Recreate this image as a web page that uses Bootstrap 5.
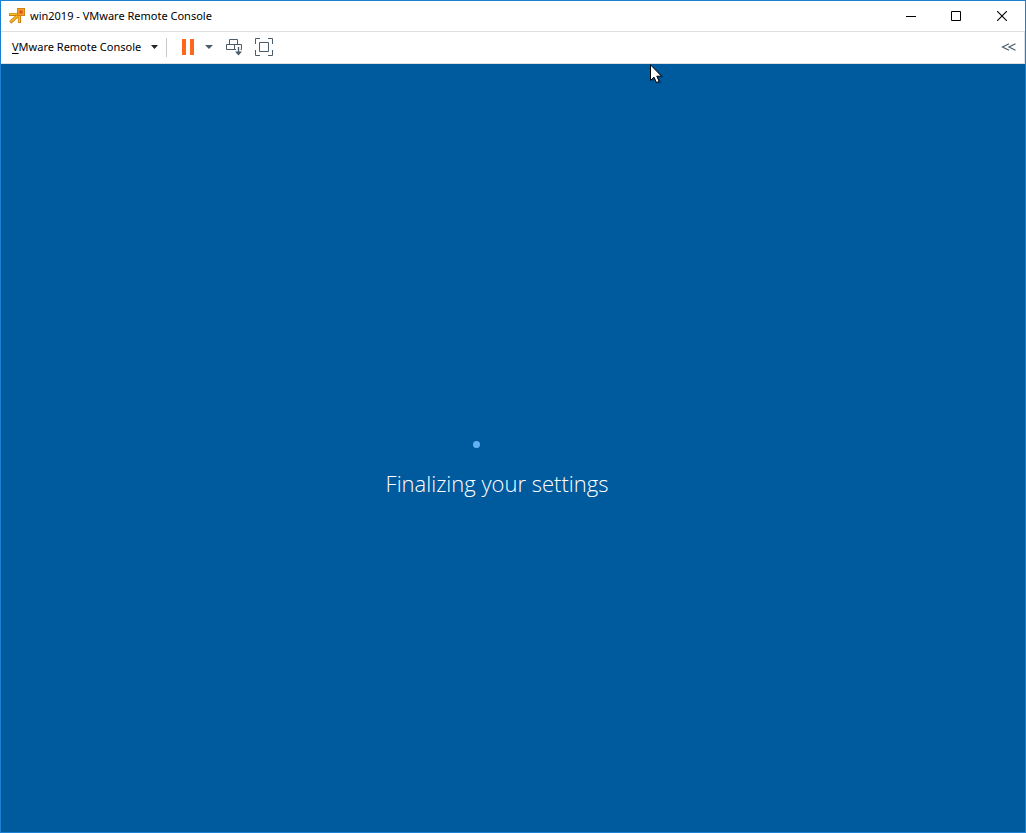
<!DOCTYPE html>
<html lang="en">
<head>
<meta charset="utf-8">
<meta name="viewport" content="width=device-width, initial-scale=1">
<title>win2019 - VMware Remote Console</title>
<link rel="stylesheet" href="https://cdn.jsdelivr.net/npm/bootstrap@5.3.0/dist/css/bootstrap.min.css">
<style>
  body { font-family: "Noto Sans", "Open Sans", sans-serif; font-size: 11px; line-height: 16px; color: #000; }
  .console-window { border: 1px solid #1a80d4; }
  .title-bar { height: 30px; padding-left: 7px; }
  .title-text { font-size: 11px; line-height: 16px; margin: 0 0 0 5px; font-weight: 400; }
  .plain-btn { background: none; border: 0; padding: 0; color: inherit; display: flex; align-items: center; justify-content: center; }
  .caption-btn { width: 46px; height: 30px; }
  .tool-bar { height: 33px; border-top: 1px solid #dfdfdf; border-bottom: 1px solid #dfdfdf; border-right: 1px solid #dfdfdf; padding: 0 8px 1px 11px; }
  .menu-btn { gap: 10px; }
  .menu-btn u { text-underline-offset: 2px; }
  .divider { width: 1px; height: 19px; background: #c8c8c8; margin: 0 14px 0 8px; }
  .tools { gap: 11px; margin-left: 11px; }
  .guest-screen { background: #005a9e; padding: 30px 32px 0 0; }
  .progress-ring { width: 48px; height: 40px; padding-top: 13px; }
  .ring-dot { width: 7px; height: 7px; background: #64b1f2; }
  .guest-text { font-family: "Open Sans", "Noto Sans", sans-serif; font-weight: 350; font-size: 22px; line-height: 30px; color: #fff; margin: 0; }
  .pointer { left: 648px; top: 0; }
  svg { display: block; flex: none; }
</style>
<script src="https://cdn.jsdelivr.net/npm/bootstrap@5.3.0/dist/js/bootstrap.bundle.min.js"></script>
</head>
<body>
<div class="console-window d-flex flex-column vh-100 bg-white">
  <header class="title-bar d-flex align-items-center">
    <svg width="17" height="17" viewBox="0 0 17 17" aria-hidden="true">
      <path d="M1 6.500H11M2.200 14.500L11 6.500M11.500 7V15" fill="none" stroke="#c9800f" stroke-width="3.200"/>
      <path d="M1.500 6.300H11M2.600 14L11 6.300M11.300 7V14.500" fill="none" stroke="#fbb829" stroke-width="1.600"/>
      <rect x="9.500" y=".5" width="7" height="7" fill="#f7b12a" stroke="#cf8412"/>
      <rect x="11" y="2" width="4" height="4" fill="#df5519" stroke="#f2892f"/>
    </svg>
    <h1 class="title-text text-nowrap">win2019 - VMware Remote Console</h1>
    <div class="d-flex ms-auto">
      <button class="plain-btn caption-btn" type="button" aria-label="Minimize">
        <svg width="12" height="11" viewBox="0 0 12 11"><path d="M2 5.500H12" stroke="#000"/></svg>
      </button>
      <button class="plain-btn caption-btn" type="button" aria-label="Maximize">
        <svg width="10" height="10" viewBox="0 0 10 10"><path d="M.5 .5H9.500V9.500H.5Z" fill="none" stroke="#000"/></svg>
      </button>
      <button class="plain-btn caption-btn" type="button" aria-label="Close">
        <svg width="10" height="10" viewBox="0 0 10 10"><path d="M0 0L10 10M10 0L0 10" stroke="#000" stroke-width="1.100"/></svg>
      </button>
    </div>
  </header>

  <nav class="tool-bar d-flex align-items-center" aria-label="Console toolbar">
    <button class="plain-btn menu-btn text-nowrap" type="button"><span><u>V</u>Mware Remote Console</span>
      <svg width="7" height="4" viewBox="0 0 7 4"><path d="M0 0H7L3.500 4Z" fill="#222"/></svg>
    </button>
    <span class="divider"></span>
    <button class="plain-btn" type="button" aria-label="Suspend guest">
      <svg width="14" height="16" viewBox="0 0 14 16"><path d="M1 0H5V16H1ZM9 0H13V16H9Z" fill="#ff681c"/></svg>
    </button>
    <button class="plain-btn ms-2" type="button" aria-label="Power options">
      <svg width="11" height="4" viewBox="0 0 11 4"><path d="M2 0H10L6 4Z" fill="#4b5c68"/></svg>
    </button>
    <div class="tools d-flex align-items-center">
      <button class="plain-btn" type="button" aria-label="Send Ctrl+Alt+Del">
        <svg width="18" height="18" viewBox="0 0 18 18" fill="none" stroke="#4b5c68">
          <path d="M4.500 6.500V1.500H12.500V6.500M11 11.500H1.500V6.500H16.500V11.500H15.500M9.500 6.500V11.500"/>
          <path d="M13.500 9V15" stroke-width="1.400"/>
          <path d="M10 13.500H17L13.500 17.500Z" fill="#4b5c68" stroke="none"/>
        </svg>
      </button>
      <button class="plain-btn" type="button" aria-label="Full screen">
        <svg width="20" height="18" viewBox="2 0 20 18" fill="none" stroke="#4b5c68">
          <path d="M3.500 6V.5H8M16 .5H20.500V6M20.500 12V17.500H16M8 17.500H3.500V12M7.500 4.500H16.500V13.500H7.500Z"/>
        </svg>
      </button>
    </div>
    <button class="plain-btn ms-auto" type="button" aria-label="Collapse toolbar">
      <svg width="15" height="8" viewBox="0 0 15 8"><path d="M8 .8L1.500 4L8 7.200M14.500 .8L8 4L14.500 7.200" fill="none" stroke="#4b5c68" stroke-width="1.200"/></svg>
    </button>
  </nav>

  <main class="guest-screen position-relative flex-grow-1 d-flex flex-column align-items-center justify-content-center">
    <div class="progress-ring" role="status" aria-label="Working"><div class="ring-dot rounded-circle"></div></div>
    <p class="guest-text text-nowrap">Finalizing your settings</p>
    <svg class="pointer position-absolute" width="16" height="22" viewBox="0 0 16 22" aria-hidden="true">
      <path d="M3 2V18L7 15L9.500 20L12.500 19L10 13.500H15Z" fill="#00366a" opacity=".6"/>
      <path d="M1.500 .8V16.500L5 13.200L7.500 18.600L10.200 17.400L7.800 12.200H12.500Z" fill="#fff" stroke="#000"/>
    </svg>
  </main>
</div>
</body>
</html>
